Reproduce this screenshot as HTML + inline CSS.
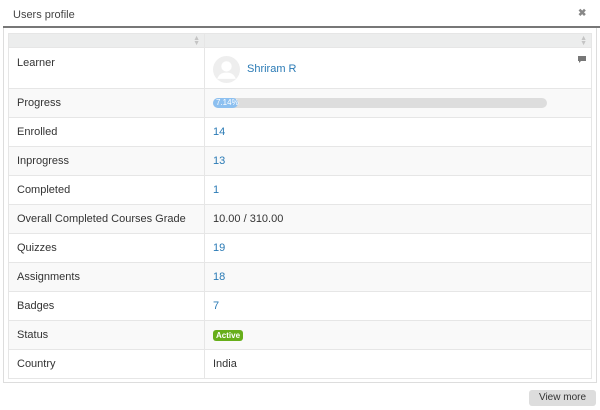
<!DOCTYPE html>
<html><head><style>
*{box-sizing:border-box;margin:0;padding:0}
body{width:600px;height:410px;background:#fff;font-family:"Liberation Sans",sans-serif;font-size:11px;color:#333;position:relative;overflow:hidden}
.title{position:absolute;left:13px;top:9px;font-size:11px;color:#444}
.close{position:absolute;left:578px;top:8px;font-size:10px;color:#888;font-weight:bold}
.hline{position:absolute;left:3px;top:26px;width:597px;height:2px;background:#777}
.box{position:absolute;left:3px;top:28px;width:594px;height:355px;border:1px solid #ddd;border-top:none}
table{position:absolute;left:8px;top:33px;width:584px;border-collapse:collapse}
td{border:1px solid #e6e6e6;padding:0 8px;height:29px;vertical-align:middle}
td:first-child{width:196px}
tr.h td{height:14px;background:#eceded;position:relative}
tr.g td{background:#f9f9f9}
a{color:#2a7ab5;text-decoration:none}
.sort{position:absolute;right:4px;top:2px;color:#c4c4c4;font-size:7px;line-height:5px}
.badge{background:#67ae1a;color:#fff;font-weight:bold;font-size:8px;padding:1px 3px;border-radius:3px}
.btn{position:absolute;left:529px;top:390px;width:67px;height:16px;background:#ddd;border-radius:3px;font-size:10px;text-align:center;line-height:16px;color:#333}
</style></head><body>
<div class="title">Users profile</div>
<div class="close">✖</div>
<div class="hline"></div>
<div class="box"></div>
<table>
<tr class="h"><td><span class="sort">▲<br>▼</span></td><td><span class="sort">▲<br>▼</span></td></tr>
<tr><td style="height:41px;vertical-align:top;padding-top:9px">Learner</td><td style="height:41px;position:relative">
<div style="display:flex;align-items:center;margin-top:2px"><svg width="27" height="27" viewBox="0 0 26 26" style="margin-right:7px"><circle cx="13" cy="13" r="13" fill="#eee"/><circle cx="13" cy="10" r="5" fill="#fff"/><path d="M4 22c2-5 5-6 9-6s7 1 9 6" fill="#fff"/></svg><a style="font-size:11px">Shriram R</a></div>
<svg width="8" height="8" viewBox="0 0 8 8" style="position:absolute;right:5px;top:8px"><path d="M0 0h8v5H3L1 7V5H0z" fill="#777"/></svg></td></tr>
<tr class="g"><td>Progress</td><td><div style="width:334px;height:10px;background:#ddd;border-radius:5px;position:relative"><div style="width:25px;height:10px;background:#8dc0f0;border-radius:5px;color:#fff;font-size:8px;line-height:10px;padding-left:3px">7.14%</div></div></td></tr>
<tr><td>Enrolled</td><td><a>14</a></td></tr>
<tr class="g"><td>Inprogress</td><td><a>13</a></td></tr>
<tr><td>Completed</td><td><a>1</a></td></tr>
<tr class="g"><td>Overall Completed Courses Grade</td><td>10.00 / 310.00</td></tr>
<tr><td>Quizzes</td><td><a>19</a></td></tr>
<tr class="g"><td>Assignments</td><td><a>18</a></td></tr>
<tr><td>Badges</td><td><a>7</a></td></tr>
<tr class="g"><td>Status</td><td><span class="badge">Active</span></td></tr>
<tr><td>Country</td><td>India</td></tr>
</table>
<div class="btn">View more</div>
</body></html>
